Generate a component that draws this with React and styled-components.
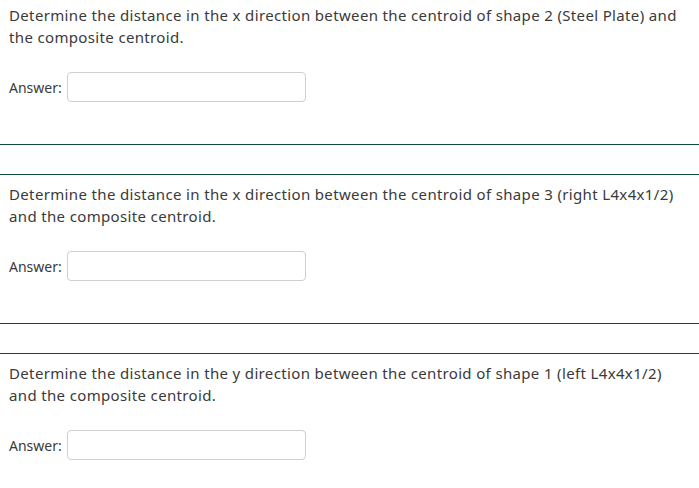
import styled, { createGlobalStyle } from "styled-components";

const GlobalStyle = createGlobalStyle`
    body {
        margin: 0;
        background: #fff;
        font-family: "Noto Sans", "Open Sans", sans-serif;
        color: #333;
    }
`;

const Page = styled.div`
    display: flex;
    flex-direction: column;
`;

const Question = styled.div`
    padding: ${(p) => (p.$first ? "4px" : "8px")} 9px 42px;
    display: flex;
    flex-direction: column;
    gap: 24px;
`;

const Prompt = styled.div`
    font-size: 15px;
    line-height: 22px;
    letter-spacing: 0.35px;
    color: #3a3a3a;
`;

const AnswerRow = styled.label`
    display: flex;
    align-items: center;
    gap: 5px;
    font-size: 14px;
    color: #3a3a3a;
`;

const Input = styled.input`
    width: 239px;
    height: 30px;
    box-sizing: border-box;
    border: 1px solid #cfcfcf;
    border-radius: 4px;
    padding: 0 8px;
    font: inherit;
    outline: none;
`;

const Divider = styled.div`
    height: 29px;
    border-top: 1px solid #0f4a3b;
    border-bottom: 1px solid #0f4a3b;
`;

const questions = [
    "Determine the distance in the x direction between the centroid of shape 2 (Steel Plate) and the composite centroid.",
    "Determine the distance in the x direction between the centroid of shape 3 (right L4x4x1/2) and the composite centroid.",
    "Determine the distance in the y direction between the centroid of shape 1 (left L4x4x1/2) and the composite centroid.",
];

const App = () => {
    return (
        <Page>
            <GlobalStyle />
            {questions.map((q, i) => (
                <div key={i}>
                    {i > 0 && <Divider />}
                    <Question $first={i === 0}>
                        <Prompt>{q}</Prompt>
                        <AnswerRow>
                            Answer:
                            <Input type="text" />
                        </AnswerRow>
                    </Question>
                </div>
            ))}
        </Page>
    );
};
export default App;
